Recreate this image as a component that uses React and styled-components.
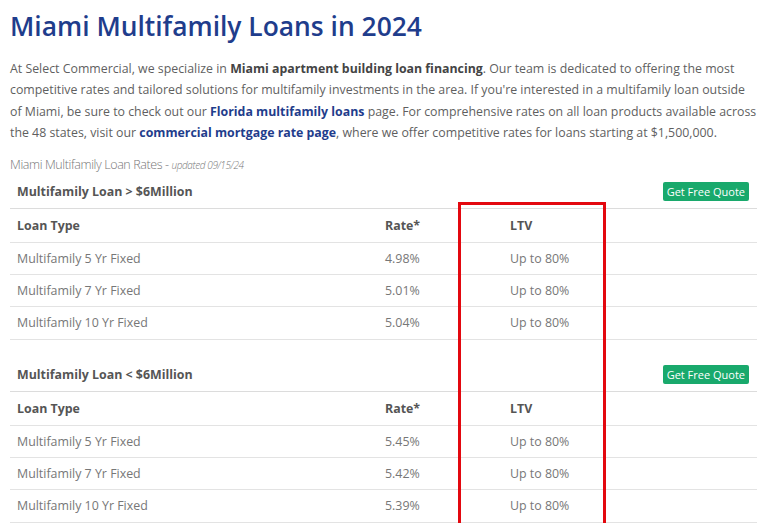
import React from "react";
import styled, { createGlobalStyle } from "styled-components";

const GlobalStyle = createGlobalStyle`
  body {
    margin: 0;
    background: #fff;
    font-family: "Open Sans", "Noto Sans", sans-serif;
  }
`;

const Page = styled.div`
  padding: 9px 11px 0 10px;
`;

const Title = styled.h1`
  margin: 0;
  font-size: 26.4px;
  line-height: 34px;
  font-weight: 600;
  color: #1f3d8c;
`;

const Intro = styled.p`
  margin: 15px 0 0;
  font-size: 12.35px;
  line-height: 21.4px;
  color: #5f5f5f;
  b {
    color: #444;
    font-weight: 700;
  }
  a {
    color: #1f3d8c;
    font-weight: 700;
    text-decoration: none;
  }
`;

const RatesTitle = styled.div`
  margin-top: 12px;
  font-size: 12.5px;
  font-weight: 300;
  color: #777;
  letter-spacing: -0.4px;
  line-height: 18px;
  em {
    font-size: 10px;
    letter-spacing: -0.4px;
  }
`;

const Tables = styled.div`
  position: relative;
  margin-top: 4px;
`;

const Table = styled.div`
  & + & {
    margin-top: 21px;
  }
`;

const Caption = styled.div`
  display: flex;
  align-items: center;
  justify-content: space-between;
  padding: 4px 8px 7px 7px;
  border-bottom: 1px solid #dcdcdc;
  font-size: 12.4px;
  font-weight: 700;
  color: #555;
`;

const QuoteButton = styled.span`
  display: inline-block;
  background: #19a96c;
  color: #fff;
  font-size: 11px;
  font-weight: 400;
  line-height: 19px;
  padding: 0 4px;
  border-radius: 2px;
`;

const Row = styled.div`
  display: grid;
  grid-template-columns: 368px 125px 1fr;
  border-bottom: 1px solid #e3e3e3;
  font-size: 12.4px;
  line-height: ${(p) => (p.$head ? "21px" : "19.33px")};
  font-weight: ${(p) => (p.$head ? 700 : 400)};
  color: ${(p) => (p.$head ? "#555" : "#777")};
  padding: 6px 0;
`;

const Cell = styled.div`
  padding-left: 7px;
`;

const Highlight = styled.div`
  position: absolute;
  left: 448px;
  top: 0;
  width: 148px;
  height: 325px;
  border: 3px solid #e3080f;
  box-sizing: border-box;
  pointer-events: none;
`;

const groups = [
  {
    title: "Multifamily Loan > $6Million",
    rows: [
      ["Multifamily 5 Yr Fixed", "4.98%"],
      ["Multifamily 7 Yr Fixed", "5.01%"],
      ["Multifamily 10 Yr Fixed", "5.04%"],
    ],
  },
  {
    title: "Multifamily Loan < $6Million",
    rows: [
      ["Multifamily 5 Yr Fixed", "5.45%"],
      ["Multifamily 7 Yr Fixed", "5.42%"],
      ["Multifamily 10 Yr Fixed", "5.39%"],
    ],
  },
];

export default function App() {
  return (
    <>
      <GlobalStyle />
      <Page>
        <Title>Miami Multifamily Loans in 2024</Title>
        <Intro>
          At Select Commercial, we specialize in <b>Miami apartment building loan financing</b>. Our team is
          dedicated to offering the most competitive rates and tailored solutions for multifamily investments in
          the area. If you're interested in a multifamily loan outside of Miami, be sure to check out our{" "}
          <a href="#">Florida multifamily loans</a> page. For comprehensive rates on all loan products available
          across the 48 states, visit our <a href="#">commercial mortgage rate page</a>, where we offer competitive
          rates for loans starting at $1,500,000.
        </Intro>
        <RatesTitle>
          Miami Multifamily Loan Rates - <em>updated 09/15/24</em>
        </RatesTitle>
        <Tables>
          {groups.map((g) => (
            <Table key={g.title}>
              <Caption>
                <span>{g.title}</span>
                <QuoteButton>Get Free Quote</QuoteButton>
              </Caption>
              <Row $head>
                <Cell>Loan Type</Cell>
                <Cell>Rate*</Cell>
                <Cell>LTV</Cell>
              </Row>
              {g.rows.map(([type, rate]) => (
                <Row key={type}>
                  <Cell>{type}</Cell>
                  <Cell>{rate}</Cell>
                  <Cell>Up to 80%</Cell>
                </Row>
              ))}
            </Table>
          ))}
          <Highlight style={{ top: 24 }} />
        </Tables>
      </Page>
    </>
  );
}
